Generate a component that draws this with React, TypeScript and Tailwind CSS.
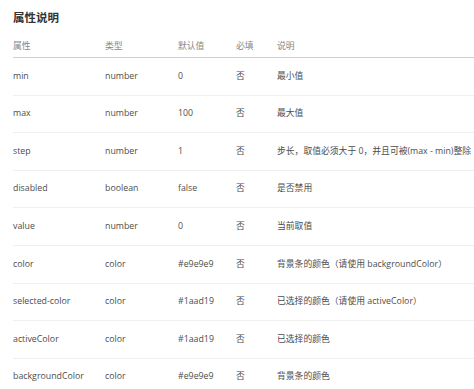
const rows = [
  { name: "min", type: "number", def: "0", req: "否", desc: "最小值" },
  { name: "max", type: "number", def: "100", req: "否", desc: "最大值" },
  { name: "step", type: "number", def: "1", req: "否", desc: "步长，取值必须大于 0，并且可被(max - min)整除" },
  { name: "disabled", type: "boolean", def: "false", req: "否", desc: "是否禁用" },
  { name: "value", type: "number", def: "0", req: "否", desc: "当前取值" },
  { name: "color", type: "color", def: "#e9e9e9", req: "否", desc: "背景条的颜色（请使用 backgroundColor）" },
  { name: "selected-color", type: "color", def: "#1aad19", req: "否", desc: "已选择的颜色（请使用 activeColor）" },
  { name: "activeColor", type: "color", def: "#1aad19", req: "否", desc: "已选择的颜色" },
  { name: "backgroundColor", type: "color", def: "#e9e9e9", req: "否", desc: "背景条的颜色" },
];

const cols = "grid grid-cols-[92px_73px_58px_41px_1fr] items-center";

export default function App() {
  return (
    <div
      className="h-[389px] w-[474px] overflow-hidden bg-white pl-[13px]"
      style={{ fontFamily: '"Open Sans", "Noto Sans CJK SC", sans-serif' }}
    >
      <h2 className="pt-[10px] text-[11.5px] font-bold leading-[15px] text-[#333]">属性说明</h2>
      <div className={`${cols} mt-[11px] h-[22px] border-b border-[#d0d0d0] text-[8.8px] text-[#888]`}>
        <span>属性</span>
        <span>类型</span>
        <span>默认值</span>
        <span>必填</span>
        <span>说明</span>
      </div>
      {rows.map((r) => (
        <div key={r.name} className={`${cols} h-[37.6px] border-b border-[#efefef] text-[8.8px] text-[#4d4d4d]`}>
          <span>{r.name}</span>
          <span>{r.type}</span>
          <span>{r.def}</span>
          <span>{r.req}</span>
          <span className="whitespace-nowrap">{r.desc}</span>
        </div>
      ))}
    </div>
  );
}
